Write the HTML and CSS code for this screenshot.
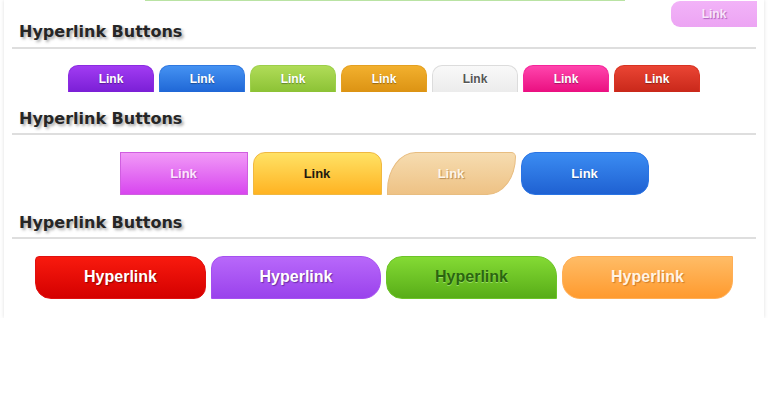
FILE: index.html
```html
<!DOCTYPE html>
<html>
<head>
<meta charset="utf-8">
<link rel="stylesheet" href="styles.css">
</head>
<body>
<div class="page">
  <div class="top">
    <div class="green-edge"></div>
    <a class="btn-top" href="#">Link</a>
  </div>

  <h2 class="heading h-first">Hyperlink Buttons</h2>
  <div class="row row1">
    <a class="tab purple" href="#">Link</a>
    <a class="tab blue" href="#">Link</a>
    <a class="tab green" href="#">Link</a>
    <a class="tab orange" href="#">Link</a>
    <a class="tab grey" href="#">Link</a>
    <a class="tab pink" href="#">Link</a>
    <a class="tab red" href="#">Link</a>
  </div>

  <h2 class="heading h-second">Hyperlink Buttons</h2>
  <div class="row row2">
    <a class="big magenta" href="#">Link</a>
    <a class="big yellow" href="#">Link</a>
    <a class="big tan" href="#">Link</a>
    <a class="big pill" href="#">Link</a>
  </div>

  <h2 class="heading h-third">Hyperlink Buttons</h2>
  <div class="row row3">
    <a class="hl hl-red" href="#">Hyperlink</a>
    <a class="hl hl-purple" href="#">Hyperlink</a>
    <a class="hl hl-green" href="#">Hyperlink</a>
    <a class="hl hl-orange" href="#">Hyperlink</a>
  </div>
</div>
</body>
</html>
```
FILE: styles.css
```css
html, body {
  margin: 0;
  padding: 0;
  background: #fff;
}

.page {
  width: 744px;
  margin-left: 4px;
  padding: 0 8px 19px 8px;
  background: #fff;
  box-shadow: 0 0 4px rgba(0, 0, 0, 0.13);
  font-family: "Liberation Sans", Arial, sans-serif;
}

.top {
  display: flex;
  align-items: flex-start;
  height: 22px;
}

.green-edge {
  width: 480px;
  height: 1px;
  margin-left: 133px;
  background: #b9e3a3;
}

.btn-top {
  margin-left: auto;
  margin-right: -1px;
  margin-top: 1px;
  width: 86px;
  height: 26px;
  line-height: 26px;
  text-align: center;
  border-radius: 9px 0 0 9px;
  background: linear-gradient(#f2b3f8, #eca4f3);
  color: #f8e6fb;
  font-size: 12px;
  font-weight: bold;
  text-decoration: none;
  text-shadow: 1px 1px 1px rgba(120, 40, 140, 0.55);
}

.heading {
  margin: 0;
  padding: 0 0 5px 7px;
  border-bottom: 2px solid #dedede;
  font-family: "DejaVu Sans", Verdana, sans-serif;
  font-size: 16px;
  line-height: 20px;
  font-weight: bold;
  color: #262626;
  text-shadow: 2px 2px 3px rgba(0, 0, 0, 0.35);
}

.h-second { margin-top: 17px; padding-bottom: 4px; }
.h-third { margin-top: 18px; padding-bottom: 4px; }

.row {
  display: flex;
  justify-content: center;
  gap: 5px;
  margin-top: 17px;
}

.row1 { margin-top: 16px; }

/* Row 1: tabs */
.tab {
  width: 84px;
  height: 25px;
  line-height: 26px;
  text-align: center;
  border: 1px solid rgba(0, 0, 0, 0.12);
  border-bottom: none;
  border-radius: 10px 10px 0 0;
  font-size: 12px;
  font-weight: bold;
  color: #fff;
  text-decoration: none;
  text-shadow: 0 1px 1px rgba(0, 0, 0, 0.35);
  padding-bottom: 1px;
}

.purple { background: linear-gradient(#a13cf2, #7a1fd6); border-color: #8b2be0; }
.blue { background: linear-gradient(#4592f2, #1f67d6); border-color: #2f78e0; }
.green { background: linear-gradient(#b0dc58, #8cc235); border-color: #9ccf4a; }
.orange { background: linear-gradient(#f2b02e, #dc9313); border-color: #e4a020; }
.grey {
  background: linear-gradient(#f9f9f9, #ececec);
  border-color: #dcdcdc;
  color: #555;
  text-shadow: 0 1px 0 #fff;
}
.pink { background: linear-gradient(#ff45ad, #ea0f80); border-color: #f5259a; }
.red { background: linear-gradient(#ea4534, #c9281a); border-color: #d83222; }

/* Row 2 */
.big {
  width: 128px;
  height: 43px;
  line-height: 42px;
  text-align: center;
  box-sizing: border-box;
  font-size: 13px;
  font-weight: bold;
  text-decoration: none;
}

.magenta {
  border: 1px solid #d05ee0;
  background: linear-gradient(#f19af7, #d846ef);
  color: #fbe6fd;
  text-shadow: 1px 1px 1px rgba(130, 30, 150, 0.45);
}

.yellow {
  width: 129px;
  border: 1px solid #f0b840;
  border-radius: 12px 12px 0 0;
  background: linear-gradient(#ffe265, #ffb322);
  color: #1e1a10;
}

.tan {
  width: 129px;
  border: 1px solid #e8bd80;
  border-radius: 30px 5px 30px 0 / 40px 5px 40px 0;
  background: linear-gradient(#f6dcb0, #eec285);
  color: #fdf6ea;
  text-shadow: 1px 1px 1px rgba(150, 100, 40, 0.6);
}

.pill {
  border: 1px solid #2a74e4;
  border-radius: 14px;
  background: linear-gradient(#3b8cf2, #1f61d2);
  color: #fff;
  text-shadow: 0 1px 1px rgba(0, 0, 0, 0.3);
}

/* Row 3 */
.hl {
  width: 171px;
  height: 43px;
  line-height: 40px;
  text-align: center;
  box-sizing: border-box;
  font-size: 16px;
  font-weight: bold;
  text-decoration: none;
}

.hl-red {
  border: 1px solid #e01010;
  border-radius: 4px 16px 12px 16px;
  background: linear-gradient(#f81a0e, #d40000);
  color: #fff;
  text-shadow: 1px 1px 1px rgba(90, 0, 0, 0.6);
}

.hl-purple {
  width: 170px;
  border: 1px solid #a650f0;
  border-radius: 12px 20px 18px 0;
  background: linear-gradient(#b868fa, #9a42ec);
  color: #fff;
  text-shadow: 1px 1px 1px rgba(70, 20, 120, 0.6);
}

.hl-green {
  border: 1px solid #6cc428;
  border-radius: 16px 20px 0 16px;
  background: linear-gradient(#84da34, #58ad18);
  color: #2b6510;
  text-shadow: 0 1px 0 rgba(200, 255, 160, 0.5);
}

.hl-orange {
  border: 1px solid #ffae55;
  border-radius: 16px 0 18px 18px;
  background: linear-gradient(#ffbc66, #ff9a2e);
  color: #fff4e4;
  text-shadow: 1px 1px 1px rgba(170, 90, 20, 0.55);
}
```
